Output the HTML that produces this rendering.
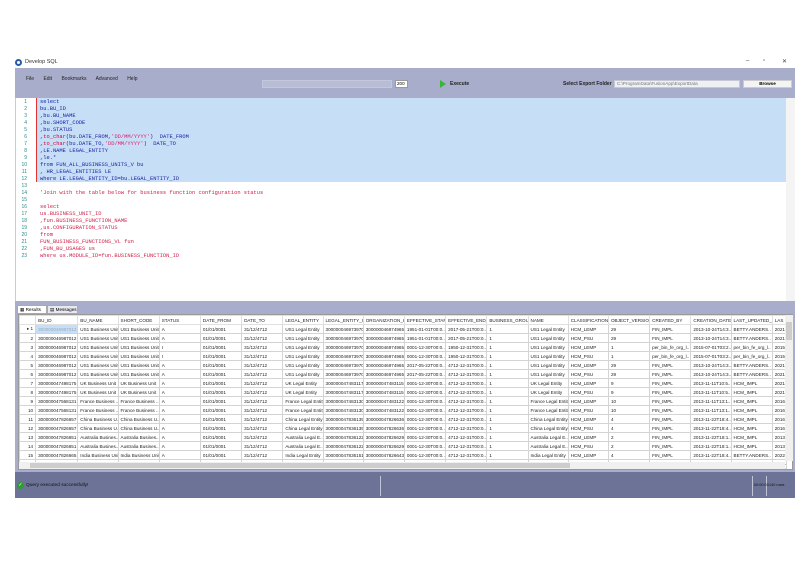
<!DOCTYPE html>
<html><head><meta charset="utf-8"><style>
*{margin:0;padding:0;box-sizing:border-box}
body{width:810px;height:565px;background:#fff;position:relative;overflow:hidden;font-family:"Liberation Sans",sans-serif}
.a{position:absolute}
.code{font-family:"Liberation Mono",monospace;font-size:5.4px;white-space:pre;line-height:7px}
.ln{color:#2b8a8a;font-size:5px;font-family:"Liberation Sans",sans-serif;text-align:right;width:12px}
table{border-collapse:collapse;table-layout:fixed;font-size:4.6px;color:#222}
td{border:1px solid #d4d4d4;height:9px;padding:0 2px;white-space:nowrap;overflow:hidden;background:#fff}
tr.h td{background:#fff;border-color:#e0e0e0}
</style></head><body>
<!-- title -->
<div class="a" style="left:15px;top:59px;width:7px;height:7px;border-radius:50%;border:2px solid #2a5aa0"></div>
<div class="a" style="left:25px;top:59px;font-size:5.5px;color:#333">Develop SQL</div>
<div class="a" style="left:746px;top:58px;font-size:6px;color:#444">–</div>
<div class="a" style="left:763px;top:58px;font-size:6px;color:#444">▫</div>
<div class="a" style="left:782px;top:58px;font-size:6px;color:#444">✕</div>
<!-- toolbar -->
<div class="a" style="left:15px;top:68px;width:780px;height:30px;background:#a8adcb"></div>
<div class="a" style="left:26px;top:76px;font-size:5px;color:#222;word-spacing:8px">File Edit Bookmarks Advanced Help</div>
<div class="a" style="left:262px;top:80px;width:130px;height:8px;background:#b8bcd4;border:1px solid #c4c8dc"></div>
<div class="a" style="left:395px;top:80px;width:13px;height:8px;background:#fff;border:1px solid #999;font-size:4.6px;padding-left:1px">200</div>
<div class="a" style="left:440px;top:80px;width:0;height:0;border-left:6px solid #3cb43c;border-top:4px solid transparent;border-bottom:4px solid transparent"></div>
<div class="a" style="left:450px;top:81px;font-size:5px;font-weight:bold;color:#222">Execute</div>
<div class="a" style="left:563px;top:81px;font-size:5px;font-weight:bold;color:#222">Select Export Folder</div>
<div class="a" style="left:614px;top:80px;width:126px;height:8px;background:#eef0f4;border:1px solid #c8c8d4;font-size:4.6px;color:#777;padding-left:2px">C:\ProgramData\FusionApp\ExportData</div>
<div class="a" style="left:743px;top:80px;width:49px;height:8px;background:#f4f4f4;border:1px solid #ccc;font-size:4.6px;font-weight:bold;text-align:center">Browse</div>
<!-- editor -->
<div class="a" style="left:15px;top:98px;width:780px;height:203px;background:#fff;border-left:1px solid #ccc"></div>
<div class="a" style="left:36px;top:98px;width:752px;height:84px;background:#c6dff7"></div>
<div class="a" style="left:36px;top:98px;width:1px;height:84px;background:#d33"></div>
<div class="a" style="left:786px;top:98px;width:9px;height:203px;background:#f4f4f4"></div>
<div class="a code ln" style="left:15px;top:99px">1
2
3
4
5
6
7
8
9
10
11
12
13
14
15
16
17
18
19
20
21
22
23</div>
<div class="a code" style="left:40px;top:99px;color:#1a1aa0">select
bu.BU_ID
,bu.BU_NAME
,bu.SHORT_CODE
,bu.STATUS
,<span style="color:#c03">to_char</span>(bu.DATE_FROM,<span style="color:#e0206a">'DD/MM/YYYY'</span>)  DATE_FROM
,<span style="color:#c03">to_char</span>(bu.DATE_TO,<span style="color:#e0206a">'DD/MM/YYYY'</span>)  DATE_TO
,LE.NAME LEGAL_ENTITY
,le.*
from FUN_ALL_BUSINESS_UNITS_V bu
, HR_LEGAL_ENTITIES LE
where LE.LEGAL_ENTITY_ID=bu.LEGAL_ENTITY_ID
<span style="color:#d0204a">
'Join with the table below for business function configuration status

select
us.BUSINESS_UNIT_ID
,fun.BUSINESS_FUNCTION_NAME
,us.CONFIGURATION_STATUS
from
FUN_BUSINESS_FUNCTIONS_VL fun
,FUN_BU_USAGES us
where us.MODULE_ID=fun.BUSINESS_FUNCTION_ID</span></div>
<!-- results area -->
<div class="a" style="left:15px;top:301px;width:780px;height:171px;background:#a8adcb"></div>
<div class="a" style="left:17px;top:305px;width:30px;height:9px;background:#fff;border:1px solid #aaa;font-size:4.6px;padding:1px 2px;white-space:nowrap">▦ Results</div>
<div class="a" style="left:47px;top:305px;width:31px;height:9px;background:#e8e8f0;border:1px solid #aaa;font-size:4.6px;padding:1px 2px;white-space:nowrap;overflow:visible">▤ Messages</div>
<div class="a" style="left:18px;top:314px;width:775px;height:156px;background:#fff;border:1px solid #999;overflow:hidden">
<table id="t" style="width:768px"></table>
</div>
<div class="a" style="left:785px;top:315px;width:8px;height:146px;background:#f0f0f0"></div>
<div class="a" style="left:786px;top:322px;width:6px;height:18px;background:#cdcdcd"></div>
<div class="a" style="left:19px;top:462px;width:766px;height:7px;background:#f0f0f0"></div>
<div class="a" style="left:30px;top:463px;width:540px;height:5px;background:#cdcdcd"></div>
<!-- status -->
<div class="a" style="left:15px;top:472px;width:780px;height:26px;background:#6c7396"></div>
<div class="a" style="left:17px;top:482px;width:7px;height:7px;border-radius:50%;background:#2aa02a;color:#fff;font-size:5px;line-height:7px;text-align:center">✓</div>
<div class="a" style="left:26px;top:483px;font-size:4.8px;color:#111">Query executed successfully!</div>
<div class="a" style="left:380px;top:476px;width:1px;height:20px;background:#c0c4d8"></div>
<div class="a" style="left:752px;top:476px;width:1px;height:20px;background:#c0c4d8"></div>
<div class="a" style="left:766px;top:476px;width:1px;height:20px;background:#c0c4d8"></div>
<div class="a" style="left:754px;top:483px;font-size:3.8px;color:#111;white-space:nowrap">00:00:03</div>
<div class="a" style="left:769px;top:483px;font-size:3.8px;color:#111;white-space:nowrap">140 rows</div>
<script>
var w=[16,42,40,41,41,41,41,40,40,41,41,41,41,40,40,41,41,40,41,14];
var h=["","BU_ID","BU_NAME","SHORT_CODE","STATUS","DATE_FROM","DATE_TO","LEGAL_ENTITY","LEGAL_ENTITY_I","ORGANIZATION_I","EFFECTIVE_STAR","EFFECTIVE_END_","BUSINESS_GROU","NAME","CLASSIFICATION_","OBJECT_VERSIOI","CREATED_BY","CREATION_DATE","LAST_UPDATED_","LAS"];
var R=[
["300000046987012","US1 Business Unit","US1 Business Unit","A","01/01/0001","31/12/4712","US1 Legal Entity","300000046973970","300000046974965","1951-01-01T00:0..","2017-05-21T00:0..","1","US1 Legal Entity","HCM_LEMP","29","FIN_IMPL","2013-10-24T14:3..","BETTY.ANDERS..","2021-"],
["300000046987012","US1 Business Unit","US1 Business Unit","A","01/01/0001","31/12/4712","US1 Legal Entity","300000046973970","300000046974965","1951-01-01T00:0..","2017-05-21T00:0..","1","US1 Legal Entity","HCM_PSU","29","FIN_IMPL","2013-10-24T14:3..","BETTY.ANDERS..","2021-"],
["300000046987012","US1 Business Unit","US1 Business Unit","I","01/01/0001","31/12/4712","US1 Legal Entity","300000046973970","300000046974965","0001-12-30T00:0..","1950-12-31T00:0..","1","US1 Legal Entity","HCM_LEMP","1","per_bin_fe_org_l..","2015-07-01T03:2..","per_bin_fe_org_l..","2015-"],
["300000046987012","US1 Business Unit","US1 Business Unit","I","01/01/0001","31/12/4712","US1 Legal Entity","300000046973970","300000046974965","0001-12-30T00:0..","1950-12-31T00:0..","1","US1 Legal Entity","HCM_PSU","1","per_bin_fe_org_l..","2015-07-01T03:2..","per_bin_fe_org_l..","2015-"],
["300000046987012","US1 Business Unit","US1 Business Unit","A","01/01/0001","31/12/4712","US1 Legal Entity","300000046973970","300000046974965","2017-05-22T00:0..","4712-12-31T00:0..","1","US1 Legal Entity","HCM_LEMP","29","FIN_IMPL","2013-10-24T14:3..","BETTY.ANDERS..","2021-"],
["300000046987012","US1 Business Unit","US1 Business Unit","A","01/01/0001","31/12/4712","US1 Legal Entity","300000046973970","300000046974965","2017-05-22T00:0..","4712-12-31T00:0..","1","US1 Legal Entity","HCM_PSU","29","FIN_IMPL","2013-10-24T14:3..","BETTY.ANDERS..","2021-"],
["300000047498175","UK Business Unit","UK Business Unit","A","01/01/0001","31/12/4712","UK Legal Entity","300000047483117","300000047483115","0001-12-30T00:0..","4712-12-31T00:0..","1","UK Legal Entity","HCM_LEMP","9","FIN_IMPL","2013-11-11T10:5..","HCM_IMPL","2021-"],
["300000047498175","UK Business Unit","UK Business Unit","A","01/01/0001","31/12/4712","UK Legal Entity","300000047483117","300000047483115","0001-12-30T00:0..","4712-12-31T00:0..","1","UK Legal Entity","HCM_PSU","9","FIN_IMPL","2013-11-11T10:5..","HCM_IMPL","2021-"],
["300000047568131","France Business ..","France Business ..","A","01/01/0001","31/12/4712","France Legal Entity","300000047483130","300000047483122","0001-12-30T00:0..","4712-12-31T00:0..","1","France Legal Entity","HCM_LEMP","10","FIN_IMPL","2013-11-11T13:1..","HCM_IMPL","2016-"],
["300000047568131","France Business ..","France Business ..","A","01/01/0001","31/12/4712","France Legal Entity","300000047483130","300000047483122","0001-12-30T00:0..","4712-12-31T00:0..","1","France Legal Entity","HCM_PSU","10","FIN_IMPL","2013-11-11T13:1..","HCM_IMPL","2016-"],
["300000047826657","China Business U..","China Business U..","A","01/01/0001","31/12/4712","China Legal Entity","300000047836139","300000047826636","0001-12-30T00:0..","4712-12-31T00:0..","1","China Legal Entity","HCM_LEMP","4","FIN_IMPL","2013-11-22T18:4..","HCM_IMPL","2016-"],
["300000047826657","China Business U..","China Business U..","A","01/01/0001","31/12/4712","China Legal Entity","300000047836139","300000047826636","0001-12-30T00:0..","4712-12-31T00:0..","1","China Legal Entity","HCM_PSU","4","FIN_IMPL","2013-11-22T18:4..","HCM_IMPL","2016-"],
["300000047826651","Australia Busines..","Australia Busines..","A","01/01/0001","31/12/4712","Australia Legal E..","300000047836122","300000047826629","0001-12-30T00:0..","4712-12-31T00:0..","1","Australia Legal E..","HCM_LEMP","2","FIN_IMPL","2013-11-22T18:1..","HCM_IMPL","2013-"],
["300000047826651","Australia Busines..","Australia Busines..","A","01/01/0001","31/12/4712","Australia Legal E..","300000047836122","300000047826629","0001-12-30T00:0..","4712-12-31T00:0..","1","Australia Legal E..","HCM_PSU","2","FIN_IMPL","2013-11-22T18:1..","HCM_IMPL","2013-"],
["300000047826665","India Business Unit","India Business Unit","A","01/01/0001","31/12/4712","India Legal Entity","300000047836151","300000047826643","0001-12-30T00:0..","4712-12-31T00:0..","1","India Legal Entity","HCM_LEMP","4","FIN_IMPL","2013-11-22T18:4..","BETTY.ANDERS..","2022-"],
["300000047826665","India Business Unit","India Business Unit","A","01/01/0001","31/12/4712","India Legal Entity","300000047836151","300000047826643","0001-12-30T00:0..","4712-12-31T00:0..","1","India Legal Entity","HCM_PSU","4","FIN_IMPL","2013-11-22T18:4..","BETTY.ANDERS..","2022-"]];
var s="<colgroup>"+w.map(x=>"<col style='width:"+x+"px'>").join("")+"</colgroup><tr class='h'>"+h.map(x=>"<td>"+x+"</td>").join("")+"</tr>";
R.forEach((r,i)=>{s+="<tr><td style='text-align:right'>"+(i==0?"▸ ":"")+(i+1)+"</td>"+r.map((c,j)=>"<td"+(i==0&&j==0?" style='background:#c6dff7;color:#9ab'":"")+">"+c+"</td>").join("")+"</tr>";});
document.getElementById("t").innerHTML=s;
</script>
</body></html>
